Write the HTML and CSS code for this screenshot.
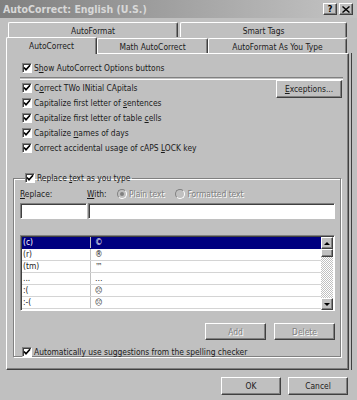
FILE: index.html
```html
<!DOCTYPE html>
<html lang="en">
<head>
    <meta charset="UTF-8">
    <title>AutoCorrect: English (U.S.)</title>
    <link rel="stylesheet" href="styles.css">
</head>
<body>
    <div class="window">
        <div class="titlebar">
            <span class="title">AutoCorrect: English (U.S.)</span>
            <span class="tbtn help">?</span>
            <span class="tbtn close">
                <svg width="8" height="7" viewBox="0 0 8 7"><path d="M0.5 0.5 L7.5 6.5 M7.5 0.5 L0.5 6.5" stroke="#000" stroke-width="1.4"/></svg>
            </span>
        </div>

        <div class="client">
            <div class="tabrow back">
                <div class="tab w-autoformat">AutoFormat</div>
                <div class="tab w-smarttags">Smart Tags</div>
            </div>
            <div class="tabrow front">
                <div class="tab selected w-autocorrect">AutoCorrect</div>
                <div class="tab w-math">Math AutoCorrect</div>
                <div class="tab w-asyoutype">AutoFormat As You Type</div>
            </div>

            <div class="panel">
                <div class="row first">
                    <span class="check"><svg width="8" height="8" viewBox="0 0 8 8"><path d="M1 3.5 L3 5.7 L7 1.2" fill="none" stroke="#000" stroke-width="1.7"/></svg></span>
                    <span>S<u>h</u>ow AutoCorrect Options buttons</span>
                </div>
                <div class="separator"></div>

                <div class="options">
                    <div class="option-list">
                        <div class="row">
                            <span class="check"><svg width="8" height="8" viewBox="0 0 8 8"><path d="M1 3.5 L3 5.7 L7 1.2" fill="none" stroke="#000" stroke-width="1.7"/></svg></span>
                            <span>C<u>o</u>rrect TWo INitial CApitals</span>
                        </div>
                        <div class="row">
                            <span class="check"><svg width="8" height="8" viewBox="0 0 8 8"><path d="M1 3.5 L3 5.7 L7 1.2" fill="none" stroke="#000" stroke-width="1.7"/></svg></span>
                            <span>Capitalize first letter of <u>s</u>entences</span>
                        </div>
                        <div class="row">
                            <span class="check"><svg width="8" height="8" viewBox="0 0 8 8"><path d="M1 3.5 L3 5.7 L7 1.2" fill="none" stroke="#000" stroke-width="1.7"/></svg></span>
                            <span>Capitalize first letter of table <u>c</u>ells</span>
                        </div>
                        <div class="row">
                            <span class="check"><svg width="8" height="8" viewBox="0 0 8 8"><path d="M1 3.5 L3 5.7 L7 1.2" fill="none" stroke="#000" stroke-width="1.7"/></svg></span>
                            <span>Capitalize <u>n</u>ames of days</span>
                        </div>
                        <div class="row">
                            <span class="check"><svg width="8" height="8" viewBox="0 0 8 8"><path d="M1 3.5 L3 5.7 L7 1.2" fill="none" stroke="#000" stroke-width="1.7"/></svg></span>
                            <span>Correct accidental usage of cAPS <u>L</u>OCK key</span>
                        </div>
                    </div>
                    <div class="button exceptions"><u>E</u>xceptions...</div>
                </div>

                <fieldset class="group">
                    <legend class="legend">
                        <span class="check"><svg width="8" height="8" viewBox="0 0 8 8"><path d="M1 3.5 L3 5.7 L7 1.2" fill="none" stroke="#000" stroke-width="1.7"/></svg></span>
                        <span>Replace <u>t</u>ext as you type</span>
                    </legend>

                    <div class="labels">
                        <span class="lbl-replace"><u>R</u>eplace:</span>
                        <span class="lbl-with"><u>W</u>ith:</span>
                        <span class="radio on"></span>
                        <span class="disabled lbl-plain">Plain text</span>
                        <span class="radio"></span>
                        <span class="disabled">Formatted text</span>
                    </div>

                    <div class="inputs">
                        <div class="field f-replace"></div>
                        <div class="field f-with"></div>
                    </div>

                    <div class="listbox">
                        <div class="list-rows">
                            <div class="list-row selected"><span class="c1">(c)</span><span class="c2">©</span></div>
                            <div class="list-row"><span class="c1">(r)</span><span class="c2">®</span></div>
                            <div class="list-row"><span class="c1">(tm)</span><span class="c2">™</span></div>
                            <div class="list-row"><span class="c1">...</span><span class="c2">…</span></div>
                            <div class="list-row"><span class="c1">:(</span><span class="c2 face">☹</span></div>
                            <div class="list-row"><span class="c1">:-(</span><span class="c2 face">☹</span></div>
                        </div>
                        <div class="scrollbar">
                            <div class="sbtn"><span class="arrow up"></span></div>
                            <div class="thumb"></div>
                            <div class="track"></div>
                            <div class="sbtn"><span class="arrow down"></span></div>
                        </div>
                    </div>

                    <div class="list-buttons">
                        <div class="button small disabled">Add</div>
                        <div class="button small disabled">Delete</div>
                    </div>

                    <div class="row spell">
                        <span class="check"><svg width="8" height="8" viewBox="0 0 8 8"><path d="M1 3.5 L3 5.7 L7 1.2" fill="none" stroke="#000" stroke-width="1.7"/></svg></span>
                        <span>Automatically use suggestions from the spelling checker</span>
                    </div>
                </fieldset>
            </div>

            <div class="footer">
                <div class="button dlg">OK</div>
                <div class="button dlg">Cancel</div>
            </div>
        </div>
    </div>
</body>
</html>
```

FILE: styles.css
```css
body {
    margin: 0;
    background: #c0c0c0;
    font-family: "DejaVu Sans Condensed", "DejaVu Sans", sans-serif;
    font-size: 8.4px;
    color: #1a1a1a;
}
u {
    text-decoration: underline;
    text-underline-offset: 1px;
}
.window {
    width: 357px;
    height: 400px;
    overflow: hidden;
    background: #c0c0c0;
}

/* title bar */
.titlebar {
    height: 18px;
    display: flex;
    align-items: center;
    padding: 0 4px 0 3px;
    background: linear-gradient(to right, #808080, #c4c4c4);
}
.title {
    flex: 1;
    font-weight: bold;
    font-size: 10.5px;
    color: #d8d8d8;
}
.tbtn {
    width: 14px;
    height: 12px;
    box-sizing: border-box;
    display: flex;
    align-items: center;
    justify-content: center;
    background: #c0c0c0;
    border-top: 1px solid #fff;
    border-left: 1px solid #fff;
    border-right: 1px solid #404040;
    border-bottom: 1px solid #404040;
    box-shadow: inset -1px -1px 0 #808080;
    font-weight: bold;
    font-size: 9px;
    color: #000;
}
.help {
    margin-right: 2px;
}

/* tabs */
.client {
    padding-top: 4px;
}
.tabrow {
    display: flex;
    height: 15px;
}
.tabrow.back {
    padding-left: 8px;
    gap: 2px;
}
.tabrow.front {
    padding-left: 6px;
    height: 16px;
}
.tab {
    box-sizing: border-box;
    height: 100%;
    display: flex;
    align-items: center;
    justify-content: center;
    border-top: 1px solid #fff;
    border-left: 1px solid #fff;
    border-right: 1px solid #404040;
    box-shadow: inset -1px 0 0 #808080;
    border-radius: 2px 2px 0 0;
    padding-top: 1px;
}
.tabrow.front .tab {
    margin-top: 1px;
    height: 15px;
}
.tabrow.front .tab.selected {
    margin-top: 0;
    height: 17px;
    position: relative;
    z-index: 1;
    background: #c0c0c0;
    padding-bottom: 2px;
}
.w-autoformat { width: 170px; }
.w-smarttags { width: 167px; }
.w-autocorrect { width: 91px; }
.w-math { width: 111px; }
.w-asyoutype { width: 139px; }

/* main panel */
.panel {
    margin-left: 6px;
    width: 343px;
    height: 317px;
    box-sizing: border-box;
    border-top: 1px solid #fff;
    border-left: 1px solid #fff;
    border-right: 1px solid #404040;
    border-bottom: 1px solid #404040;
    box-shadow: inset -1px -1px 0 #808080, 2px 0 0 #c0c0c0, 3px 0 0 #404040;
    padding: 0 0 0 15px;
}
.row {
    height: 15px;
    display: flex;
    align-items: center;
    gap: 2px;
    white-space: nowrap;
}
.row.first {
    margin-top: 6px;
}
.check {
    width: 10px;
    height: 10px;
    box-sizing: border-box;
    background: #fff;
    border-top: 1px solid #808080;
    border-left: 1px solid #808080;
    border-right: 1px solid #fff;
    border-bottom: 1px solid #fff;
    box-shadow: inset 1px 1px 0 #404040;
    display: flex;
    align-items: center;
    justify-content: center;
    flex-shrink: 0;
}
.separator {
    margin: 2px 5px 0 -2px;
    height: 1px;
    border-top: 1px solid #808080;
    border-bottom: 1px solid #fff;
}
.options {
    display: flex;
    justify-content: space-between;
    padding-right: 6px;
}
.button {
    box-sizing: border-box;
    display: flex;
    align-items: center;
    justify-content: center;
    background: #c0c0c0;
    border-top: 1px solid #fff;
    border-left: 1px solid #fff;
    border-right: 1px solid #404040;
    border-bottom: 1px solid #404040;
    box-shadow: inset -1px -1px 0 #808080;
}
.exceptions {
    width: 66px;
    height: 18px;
}
.disabled {
    color: #808080;
    text-shadow: 1px 1px 0 #fff;
}

/* replace group */
.group {
    margin: 16px 0 0 -9px;
    width: 327px;
    height: 186px;
    box-sizing: border-box;
    padding: 0 5px 0 6px;
    border: 1px solid #808080;
    box-shadow: inset 1px 1px 0 #fff, 1px 1px 0 #fff;
}
.legend {
    display: flex;
    align-items: center;
    gap: 2px;
    padding: 0 2px 0 0;
    margin-left: 5px;
    height: 14px;
}
.labels {
    display: flex;
    align-items: center;
    height: 14px;
    margin-top: 2px;
    white-space: nowrap;
}
.lbl-replace { width: 67px; }
.lbl-with { width: 30px; }
.lbl-plain { margin-right: 11px; }
.radio {
    width: 10px;
    height: 10px;
    box-sizing: border-box;
    border-radius: 50%;
    border: 1px solid #808080;
    border-right-color: #fff;
    border-bottom-color: #fff;
    background: #c0c0c0;
    margin-right: 2px;
    display: flex;
    align-items: center;
    justify-content: center;
}
.radio.on::after {
    content: "";
    width: 4px;
    height: 4px;
    border-radius: 50%;
    background: #808080;
}
.inputs {
    display: flex;
    gap: 1px;
    margin-top: 2px;
}
.field {
    height: 16px;
    box-sizing: border-box;
    background: #fff;
    border-top: 1px solid #808080;
    border-left: 1px solid #808080;
    border-right: 1px solid #fff;
    border-bottom: 1px solid #fff;
    box-shadow: inset 1px 1px 0 #404040;
}
.f-replace { width: 67px; }
.f-with { width: 247px; }

.listbox {
    margin-top: 16px;
    width: 315px;
    height: 76px;
    box-sizing: border-box;
    display: flex;
    background: #fff;
    border-top: 1px solid #808080;
    border-left: 1px solid #808080;
    border-right: 1px solid #fff;
    border-bottom: 1px solid #fff;
    box-shadow: inset 1px 1px 0 #404040;
    padding: 1px 1px 0 1px;
}
.list-rows {
    flex: 1;
}
.list-row {
    display: flex;
    height: 12px;
    box-sizing: border-box;
    border-bottom: 1px solid #d4d4d4;
    line-height: 11px;
}
.list-row.selected {
    background: #000080;
    color: #fff;
    border-bottom-color: #000080;
}
.c1 {
    width: 67px;
    border-right: 1px solid #c0c0c0;
    padding-left: 1px;
}
.c2 {
    padding-left: 4px;
}
.face {
    font-size: 8px;
}
.scrollbar {
    width: 12px;
    display: flex;
    flex-direction: column;
}
.sbtn, .thumb {
    box-sizing: border-box;
    height: 12px;
    background: #c0c0c0;
    border-top: 1px solid #fff;
    border-left: 1px solid #fff;
    border-right: 1px solid #404040;
    border-bottom: 1px solid #404040;
    box-shadow: inset -1px -1px 0 #808080;
    display: flex;
    align-items: center;
    justify-content: center;
}
.thumb {
    height: 8px;
}
.track {
    flex: 1;
    background: repeating-conic-gradient(#fff 0 25%, #c0c0c0 0 50%) 0 0 / 2px 2px;
}
.arrow {
    width: 0;
    height: 0;
    border-left: 3px solid transparent;
    border-right: 3px solid transparent;
}
.arrow.up { border-bottom: 3px solid #000; }
.arrow.down { border-top: 3px solid #000; }

.list-buttons {
    display: flex;
    justify-content: flex-end;
    gap: 8px;
    width: 315px;
    margin-top: 12px;
}
.button.small {
    width: 61px;
    height: 17px;
}
.row.spell {
    margin-top: 4px;
    margin-left: 2px;
}

/* footer */
.footer {
    display: flex;
    justify-content: flex-end;
    gap: 7px;
    padding: 7px 9px 0 0;
}
.button.dlg {
    width: 60px;
    height: 18px;
}
```
